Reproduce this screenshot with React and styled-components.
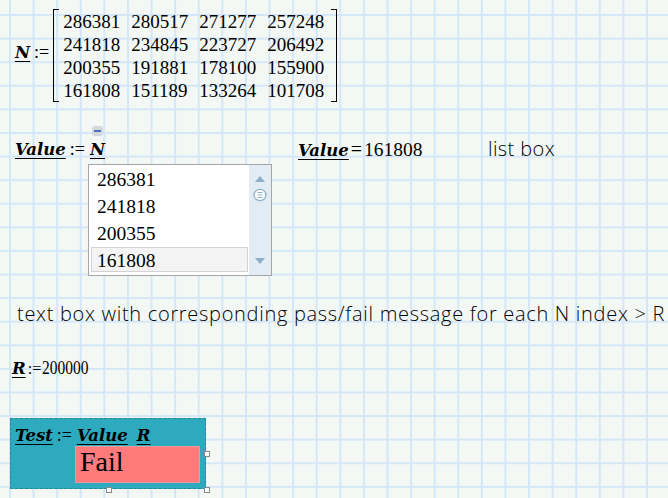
import React from "react";
import styled, { createGlobalStyle } from "styled-components";

const matrix = [
  ["286381", "280517", "271277", "257248"],
  ["241818", "234845", "223727", "206492"],
  ["200355", "191881", "178100", "155900"],
  ["161808", "151189", "133264", "101708"],
];

const listItems = ["286381", "241818", "200355", "161808"];

function App() {
  return (
    <>
      <GlobalStyle />
      <Sheet>
        <MatrixRegion>
          <DefLabel>
            <Var>N</Var>
            <Assign>:=</Assign>
          </DefLabel>
          <Matrix>
            <Bracket />
            <MatrixGrid>
              {matrix.flat().map((v, i) => (
                <Cell key={i}>{v}</Cell>
              ))}
            </MatrixGrid>
            <Bracket right />
          </Matrix>
        </MatrixRegion>

        <ValueRow>
          <DefRegion>
            <Expr>
              <Var>Value</Var>
              <Assign>:=</Assign>
              <NWrap>
                <Collapse>
                  <span />
                </Collapse>
                <Var>N</Var>
              </NWrap>
            </Expr>
            <ListBox>
              <Items>
                {listItems.map((v, i) => (
                  <Item key={v} selected={i === 3}>
                    {v}
                  </Item>
                ))}
              </Items>
              <ScrollBar>
                <svg width="22" height="108" viewBox="0 0 22 108">
                  <path d="M6 17 L11 11 L16 17 Z" fill="#8eb0c6" />
                  <ellipse cx="11" cy="30" rx="6" ry="5.6" fill="#fff" stroke="#8eb0c6" strokeWidth="1.3" />
                  <path d="M8.5 27.5 H13.5 M8.5 30 H13.5 M8.5 32.5 H13.5" stroke="#8eb0c6" strokeWidth="1" />
                  <path d="M6 93 L16 93 L11 99 Z" fill="#8eb0c6" />
                </svg>
              </ScrollBar>
            </ListBox>
          </DefRegion>

          <EvalRegion>
            <Var>Value</Var>
            <Equals>=</Equals>
            <Num>161808</Num>
          </EvalRegion>

          <Note>list box</Note>
        </ValueRow>

        <Comment>text box with corresponding pass/fail message for each N index &gt; R</Comment>

        <RRegion>
          <Var>R</Var>
          <Assign tight>:=</Assign>
          <Num condensed>200000</Num>
        </RRegion>

        <TestBox>
          <Expr>
            <Var>Test</Var>
            <Assign>:=</Assign>
            <Var>Value</Var>
            <Spacer />
            <Var>R</Var>
          </Expr>
          <FailBox>Fail</FailBox>
          <Handle x={193} y={32} />
          <Handle x={95} y={68} />
          <Handle x={193} y={68} />
        </TestBox>
      </Sheet>
    </>
  );
}

export default App;

const GlobalStyle = createGlobalStyle`
  html, body {
    margin: 0;
    padding: 0;
  }
  body {
    font-family: "Liberation Serif", serif;
    color: #000;
  }
`;

const Sheet = styled.div`
  width: 668px;
  min-height: 498px;
  box-sizing: border-box;
  overflow: hidden;
  background-color: #f3f8f5;
  background-image: linear-gradient(to right, #d4e7f8 1.5px, transparent 1.5px),
    linear-gradient(to bottom, #d4e7f8 1.5px, transparent 1.5px);
  background-size: 23.6px 23.6px;
  background-position: 9px 14px;
  display: flex;
  flex-direction: column;
  align-items: flex-start;
`;

const Var = styled.span`
  font-family: "DejaVu Serif", serif;
  font-weight: bold;
  font-style: italic;
  font-size: 16.5px;
  text-decoration: underline;
  text-decoration-thickness: 1.4px;
  text-underline-offset: 3px;
`;

const Assign = styled.span`
  font-family: "Liberation Serif", serif;
  font-size: ${(p) => (p.tight ? "16px" : "18px")};
  margin: ${(p) => (p.tight ? "0 1px 0 2px" : "0 5px 0 4px")};
`;

const Equals = styled.span`
  font-size: 20px;
  margin: 0 2px 0 2px;
`;

const Num = styled.span`
  display: inline-block;
  font-size: ${(p) => (p.condensed ? "18px" : "19.5px")};
  transform: ${(p) => (p.condensed ? "scaleX(0.86)" : "none")};
  transform-origin: left center;
`;

const MatrixRegion = styled.div`
  display: flex;
  align-items: center;
  margin: 9px 0 0 15px;
`;

const DefLabel = styled.div`
  display: flex;
  align-items: baseline;
  line-height: 20px;
  margin-bottom: 6px;
`;

const Matrix = styled.div`
  display: flex;
  align-items: stretch;
  margin-left: -1px;
`;

const Bracket = styled.div`
  width: 5px;
  border: 1.6px solid #000;
  ${(p) => (p.right ? "border-left: none;" : "border-right: none;")}
`;

const MatrixGrid = styled.div`
  display: grid;
  grid-template-columns: repeat(4, auto);
  column-gap: 11px;
  padding: 1px 7px 0 4px;
`;

const Cell = styled.div`
  font-size: 19px;
  line-height: 23px;
`;

const ValueRow = styled.div`
  display: flex;
  align-items: flex-start;
  margin: 36px 0 0 15px;
`;

const DefRegion = styled.div`
  display: flex;
  flex-direction: column;
  width: 283px;
`;

const Expr = styled.div`
  display: flex;
  align-items: baseline;
  line-height: 22px;
`;

const NWrap = styled.span`
  position: relative;
`;

const Collapse = styled.span`
  position: absolute;
  left: 2px;
  top: -13px;
  width: 11px;
  height: 10px;
  border-radius: 3px;
  background: #d3d8dc;
  display: flex;
  align-items: center;
  justify-content: center;

  span {
    width: 7px;
    height: 2px;
    background: #4a6fc0;
  }
`;

const ListBox = styled.div`
  display: flex;
  width: 182px;
  height: 110px;
  margin: 3px 0 0 73px;
  background: #fff;
  border: 1px solid #a6a6a6;
`;

const Items = styled.div`
  flex: 1;
  padding: 1px 1px 0 2px;
`;

const Item = styled.div`
  height: 25px;
  line-height: 25px;
  margin-bottom: 2px;
  padding-left: 5px;
  font-size: 19.5px;
  box-sizing: border-box;
  background: ${(p) => (p.selected ? "#f4f4f4" : "transparent")};
  border: 1px solid ${(p) => (p.selected ? "#d2d2d2" : "transparent")};
`;

const ScrollBar = styled.div`
  width: 22px;
  background: #e2ecf5;
  display: flex;
`;

const EvalRegion = styled.div`
  display: flex;
  align-items: baseline;
  line-height: 22px;
  width: 190px;
`;

const Note = styled.div`
  font-family: "Open Sans", sans-serif;
  font-weight: 300;
  font-size: 20px;
  letter-spacing: 0.4px;
  line-height: 22px;
`;

const Comment = styled.div`
  font-family: "Open Sans", sans-serif;
  font-weight: 300;
  font-size: 20px;
  letter-spacing: 0.7px;
  line-height: 22px;
  margin: 27px 0 0 17px;
  white-space: nowrap;
`;

const RRegion = styled.div`
  display: flex;
  align-items: baseline;
  line-height: 22px;
  margin: 32px 0 0 12px;
`;

const TestBox = styled.div`
  position: relative;
  box-sizing: border-box;
  width: 196px;
  height: 71px;
  margin: 38px 0 0 10px;
  padding: 5px 0 0 4px;
  background: #2eaabf;
  border: 1px dashed #23899b;
`;

const Spacer = styled.span`
  width: 9px;
`;

const FailBox = styled.div`
  box-sizing: border-box;
  width: 125px;
  height: 37px;
  margin: -1px 0 0 60px;
  padding-left: 4px;
  background: #ff7b7b;
  border: 1px solid #e99a9a;
  font-size: 28px;
  line-height: 29px;
`;

const Handle = styled.span`
  position: absolute;
  left: ${(p) => p.x}px;
  top: ${(p) => p.y}px;
  width: 4px;
  height: 4px;
  background: #fff;
  border: 1px solid #8a8a8a;
`;
